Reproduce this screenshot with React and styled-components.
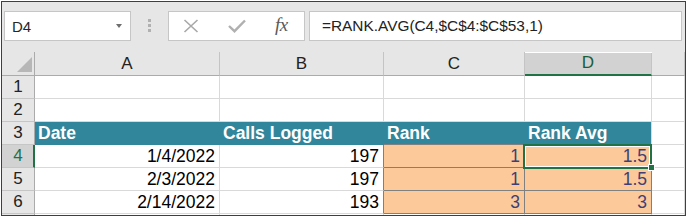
import React from 'react';
import styled, { createGlobalStyle } from 'styled-components';

const GRID = '#d9d9d9';
const TEAL = '#31869b';
const ORANGE = '#fcca9a';
const INPUT_BORDER = '#808080';
const GREEN = '#217346';
const HEADER_BG = '#e6e6e6';
const HEADER_SEL = '#d2d2d2';

const Global = createGlobalStyle`
  html, body { margin: 0; padding: 0; background: #fff; overflow: hidden; }
  * { box-sizing: border-box; }
`;

const Page = styled.div`
  width: 687px;
  height: 217px;
  padding: 1px;
  background: #fff;
`;

const Frame = styled.div`
  width: 685px;
  height: 215px;
  border: 1px solid #3f3f3f;
  overflow: hidden;
  display: flex;
  flex-direction: column;
  font-family: "Liberation Sans", Arial, sans-serif;
`;

const FormulaBar = styled.div`
  height: 50px;
  flex: none;
  background: ${HEADER_BG};
  display: flex;
  align-items: flex-start;
  padding: 9px 3px 0 2px;
`;

const Box = styled.div`
  height: 30px;
  background: #fff;
  border: 1px solid #c6c6c6;
  display: flex;
  align-items: center;
`;

const NameBox = styled(Box)`
  width: 127px;
  padding-left: 7px;
  font-size: 15px;
  color: #262626;
`;

const Caret = styled.span`
  margin-left: auto;
  margin-right: 8px;
  width: 0;
  height: 0;
  border-left: 3.5px solid transparent;
  border-right: 3.5px solid transparent;
  border-top: 4px solid #6e6e6e;
`;

const Grip = styled.div`
  margin: 8px 17px 0 17px;
  width: 3px;
  display: flex;
  flex-direction: column;
  gap: 2px;
`;

const Dot = styled.span`
  width: 3px;
  height: 3px;
  background: #b1b1b1;
`;

const ButtonBox = styled(Box)`
  width: 137px;
  padding-left: 14px;
`;

const IconSlot = styled.span`
  display: flex;
  align-items: center;
  margin-right: ${(p) => p.$gap}px;
`;

const Fx = styled.span`
  font-family: "Liberation Serif", "Times New Roman", serif;
  font-style: italic;
  font-size: 19px;
  color: #5a5a5a;
  letter-spacing: -0.5px;
  margin-top: -2px;
`;

const FormulaInput = styled(Box)`
  flex: 1;
  margin-left: 4px;
  padding-left: 12px;
  font-size: 15.4px;
  color: #222;
  white-space: nowrap;
`;

const Sheet = styled.div`
  display: grid;
  grid-template-columns: 33px 185px 164px 141px 127px 1fr;
  grid-template-rows: 24px repeat(7, 23px);
`;

const Corner = styled.div`
  background: ${HEADER_BG};
  border-right: 1px solid #ababab;
  border-bottom: 1px solid #ababab;
  display: flex;
  align-items: flex-end;
  justify-content: flex-end;
  padding: 0 2px 3px 0;
`;

const Triangle = styled.span`
  width: 0;
  height: 0;
  border-left: 15px solid transparent;
  border-bottom: 15px solid #b7b7b7;
`;

const ColHead = styled.div`
  background: ${(p) => (p.$sel ? HEADER_SEL : HEADER_BG)};
  border-right: 1px solid #c4c4c4;
  border-bottom: ${(p) => (p.$sel ? `2px solid ${GREEN}` : '1px solid #ababab')};
  margin-top: ${(p) => (p.$sel ? '1px' : '0')};
  text-align: center;
  font-size: 17px;
  line-height: ${(p) => (p.$sel ? '20px' : '23px')};
  color: ${(p) => (p.$sel ? '#1d5e3a' : '#222')};
`;

const RowHead = styled.div`
  background: ${(p) => (p.$sel ? HEADER_SEL : HEADER_BG)};
  border-right: ${(p) => (p.$sel ? `2px solid ${GREEN}` : '1px solid #ababab')};
  border-bottom: 1px solid #c6c6c6;
  text-align: center;
  font-size: 17px;
  line-height: 22px;
  padding-left: ${(p) => (p.$sel ? '1px' : '0')};
  color: ${(p) => (p.$sel ? GREEN : '#222')};
`;

const Cell = styled.div`
  position: relative;
  background: ${(p) => p.$bg || '#fff'};
  border-right: 1px solid ${(p) => p.$right || GRID};
  border-bottom: 1px solid ${(p) => p.$bottom || GRID};
  font-size: 17.5px;
  line-height: 22px;
  font-weight: ${(p) => (p.$bold ? 700 : 400)};
  color: ${(p) => p.$color || '#000'};
  text-align: ${(p) => (p.$left ? 'left' : 'right')};
  padding: 0 4px 0 3px;
  white-space: nowrap;
`;

const Selection = styled.span`
  position: absolute;
  left: -2px;
  top: -1px;
  right: -1px;
  bottom: -2px;
  border: 2px solid ${GREEN};
  box-shadow: inset 0 0 0 1px #fff;
  z-index: 2;
  pointer-events: none;
`;

const FillHandle = styled.span`
  position: absolute;
  right: -4px;
  bottom: -4px;
  width: 7px;
  height: 7px;
  background: ${GREEN};
  border: 1px solid #fff;
  z-index: 3;
`;

const XIcon = () => (
  <svg width="16" height="14" viewBox="0 0 16 14">
    <path d="M1.5 1 L14.5 13 M14.5 1 L1.5 13" stroke="#a8a8a8" strokeWidth="1.6" fill="none" />
  </svg>
);

const CheckIcon = () => (
  <svg width="18" height="14" viewBox="0 0 18 14">
    <path d="M1 7 L6.5 12.2 L17 1.5" stroke="#b0b0b0" strokeWidth="2.4" fill="none" />
  </svg>
);

const data = [
  ['1/4/2022', '197', '1', '1.5'],
  ['2/3/2022', '197', '1', '1.5'],
  ['2/14/2022', '193', '3', '3'],
];

export default function App() {
  const rows = [];
  [1, 2].forEach((n) => {
    rows.push(<RowHead key={`h${n}`}>{n}</RowHead>);
    for (let c = 0; c < 5; c++) rows.push(<Cell key={`r${n}c${c}`} />);
  });
  rows.push(<RowHead key="h3">3</RowHead>);
  ['Date', 'Calls Logged', 'Rank', 'Rank Avg'].forEach((t, i) => (
    rows.push(
      <Cell
        key={`r3c${i}`}
        $bg={TEAL}
        $color="#fff"
        $bold
        $left
        $right={i < 3 ? TEAL : GRID}
        $bottom={i >= 2 ? INPUT_BORDER : TEAL}
      >
        {t}
      </Cell>
    )
  ));
  rows.push(<Cell key="r3e" />);
  data.forEach((d, i) => {
    const n = i + 4;
    rows.push(<RowHead key={`h${n}`} $sel={n === 4}>{n}</RowHead>);
    rows.push(<Cell key={`r${n}a`}>{d[0]}</Cell>);
    rows.push(<Cell key={`r${n}b`} $right={INPUT_BORDER}>{d[1]}</Cell>);
    rows.push(
      <Cell key={`r${n}c`} $bg={ORANGE} $color="#3f3f76" $right={INPUT_BORDER} $bottom={INPUT_BORDER}>
        {d[2]}
      </Cell>
    );
    rows.push(
      <Cell key={`r${n}d`} $bg={ORANGE} $color="#3f3f76" $right={INPUT_BORDER} $bottom={INPUT_BORDER}>
        {d[3]}
        {n === 4 && (
          <>
            <Selection />
            <FillHandle />
          </>
        )}
      </Cell>
    );
    rows.push(<Cell key={`r${n}e`} />);
  });
  rows.push(<RowHead key="h7" />);
  for (let c = 0; c < 5; c++) rows.push(<Cell key={`r7c${c}`} />);

  return (
    <Page>
      <Global />
      <Frame>
        <FormulaBar>
          <NameBox>
            D4
            <Caret />
          </NameBox>
          <Grip>
            <Dot />
            <Dot />
            <Dot />
          </Grip>
          <ButtonBox>
            <IconSlot $gap={29}><XIcon /></IconSlot>
            <IconSlot $gap={29}><CheckIcon /></IconSlot>
            <Fx>fx</Fx>
          </ButtonBox>
          <FormulaInput>=RANK.AVG(C4,$C$4:$C$53,1)</FormulaInput>
        </FormulaBar>
        <Sheet>
          <Corner><Triangle /></Corner>
          {['A', 'B', 'C', 'D', ''].map((l) => (
            <ColHead key={l || 'E'} $sel={l === 'D'}>{l}</ColHead>
          ))}
          {rows}
        </Sheet>
      </Frame>
    </Page>
  );
}
